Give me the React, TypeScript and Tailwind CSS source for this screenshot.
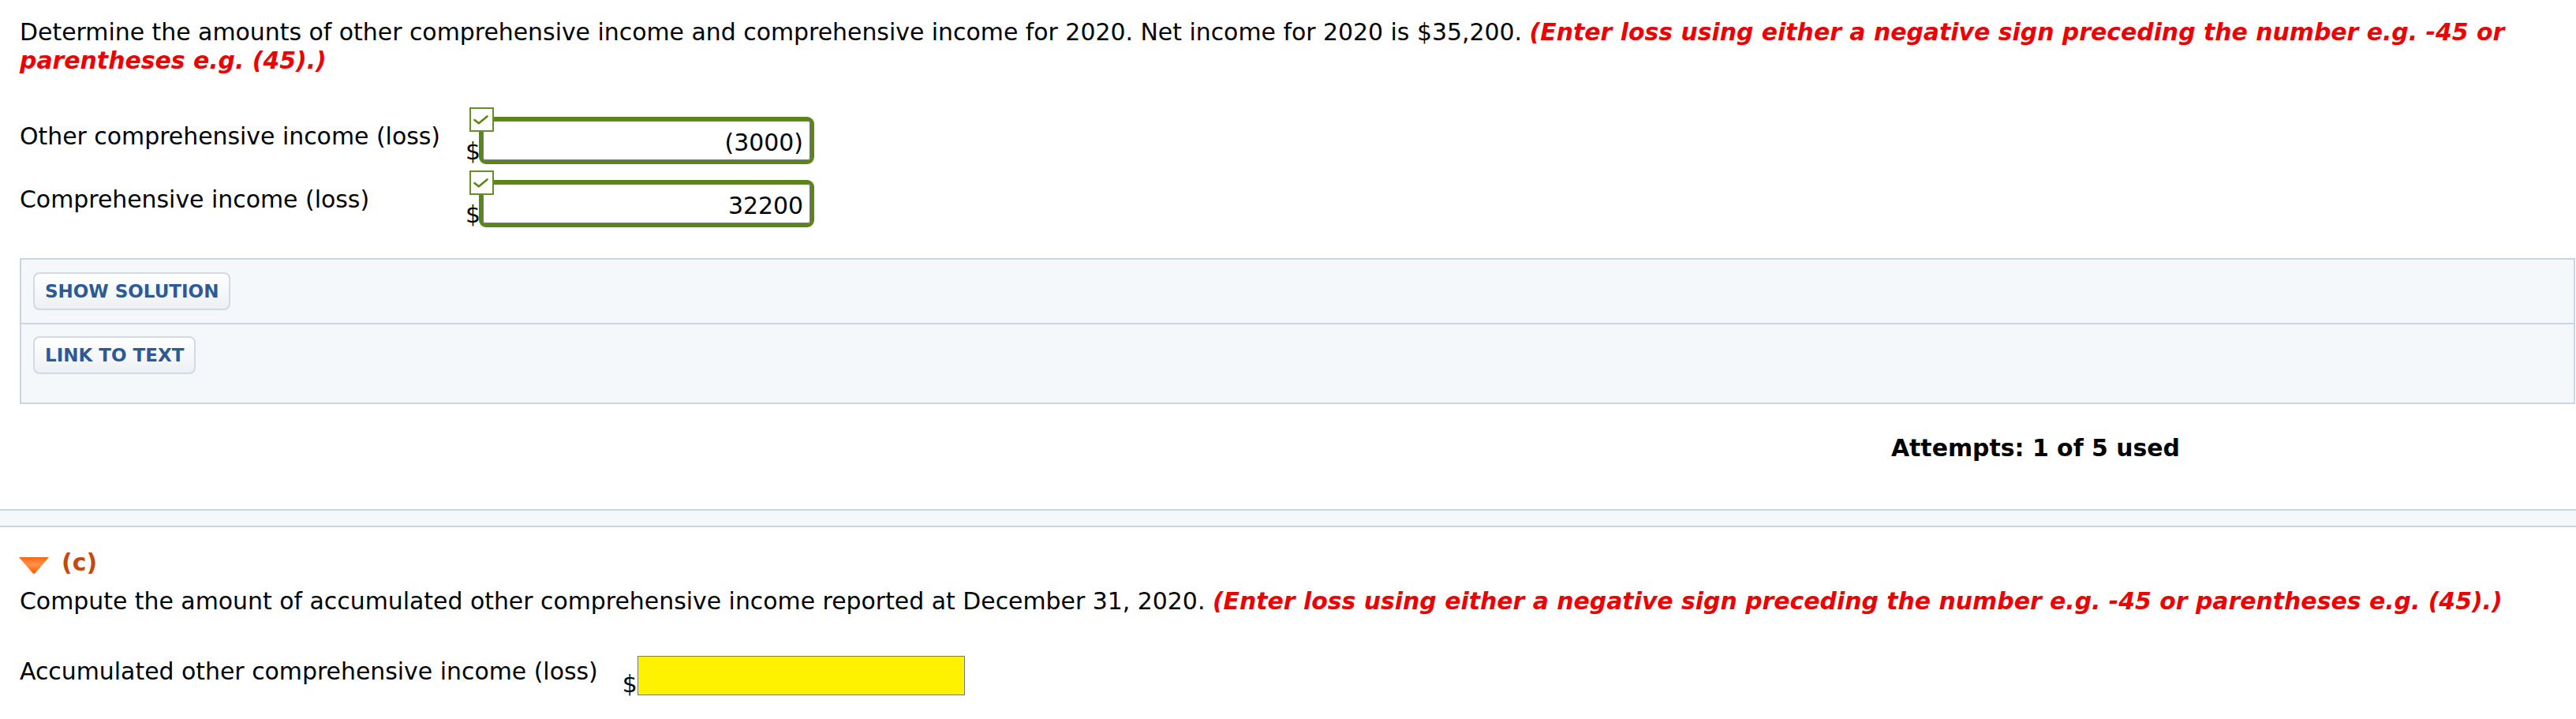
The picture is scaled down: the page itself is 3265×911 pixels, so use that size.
import React from "react";

function CorrectMark() {
  return (
    <svg
      width="31"
      height="31"
      viewBox="0 0 31 31"
      className="absolute left-[-17px] top-[-17px]"
    >
      <rect x="1" y="1" width="29" height="29" fill="#fff" stroke="#688f24" strokeWidth="2" />
      <polyline
        points="6.5,16 11.8,20.3 22.5,11.5"
        fill="none"
        stroke="#5c8517"
        strokeWidth="2.6"
        strokeLinejoin="round"
        strokeLinecap="round"
      />
    </svg>
  );
}

function AnsweredInput({ value }: { value: string }) {
  return (
    <div className="flex items-end">
      <span className="leading-[32px] w-[17px]">$</span>
      <div className="relative w-[425px] h-[60px] rounded-[9px] border-[5px] border-[#5c8517] bg-white">
        <input
          readOnly
          value={value}
          className="w-full h-full rounded-[3px] border border-[#777] bg-white text-right pr-[8px] pt-[5px] outline-none font-['DejaVu_Sans',sans-serif] text-[29.9px] text-black"
        />
        <CorrectMark />
      </div>
    </div>
  );
}

function PanelButton({ label }: { label: string }) {
  return (
    <button className="h-[48px] px-[13px] rounded-[8px] border-2 border-[#d3dae5] bg-gradient-to-b from-white to-[#edf0f4] text-[23px] font-bold text-[#2d5a94] leading-none">
      {label}
    </button>
  );
}

export default function App() {
  const rows = [
    { label: "Other comprehensive income (loss)", value: "(3000)" },
    { label: "Comprehensive income (loss)", value: "32200" },
  ];

  return (
    <div className="min-h-[911px] bg-white text-black font-['DejaVu_Sans',sans-serif] text-[29.9px] leading-[36px]">
      <div className="pl-[25px] pr-px pt-[23px]">
        <p className="whitespace-nowrap">
          Determine the amounts of other comprehensive income and comprehensive income for 2020. Net income for
          2020 is $35,200.{" "}
          <strong className="italic text-[#ee0000]">
            (Enter loss using either a negative sign preceding the number e.g. -45 or
            <br />
            parentheses e.g. (45).)
          </strong>
        </p>

        <div className="mt-[35px] grid grid-cols-[auto_auto] justify-start gap-x-[32px]">
          {rows.map((row) => (
            <React.Fragment key={row.label}>
              <div className="h-[80px] pt-[25px]">{row.label}</div>
              <div className="h-[80px] pt-[18px] flex items-start">
                <AnsweredInput value={row.value} />
              </div>
            </React.Fragment>
          ))}
        </div>

        <div className="mt-[37px] border-2 border-[#cbd4e1] bg-[#f5f8fb]">
          <div className="px-[15px] pt-[16px] pb-[16px] border-b-2 border-[#cbd4e1]">
            <PanelButton label="SHOW SOLUTION" />
          </div>
          <div className="px-[15px] pt-[15px] pb-[36px]">
            <PanelButton label="LINK TO TEXT" />
          </div>
        </div>

        <div className="mt-[38px] flex justify-end pr-[501px]">
          <span className="font-bold">Attempts: 1 of 5 used</span>
        </div>
      </div>

      <div className="mt-[59px] h-[23px] border-y-2 border-[#cbd4e1] bg-[#f5f8fb]" />

      <div className="pl-[25px] pr-px">
        <div className="mt-[27px] flex items-start">
          <svg width="38" height="21" viewBox="0 0 38 21" className="ml-[-1px] mt-[11px] mr-[16px]">
            <defs>
              <linearGradient id="tri" x1="0" y1="0" x2="0" y2="1">
                <stop offset="0" stopColor="#ff6410" />
                <stop offset="0.45" stopColor="#ff9448" />
                <stop offset="1" stopColor="#ff5a00" />
              </linearGradient>
            </defs>
            <path d="M0 0 H38 L20.5 20.2 Q19 21.5 17.5 20.2 Z" fill="url(#tri)" />
          </svg>
          <span className="font-bold text-[#c8470c]">(c)</span>
        </div>

        <p className="mt-[13px] whitespace-nowrap">
          Compute the amount of accumulated other comprehensive income reported at December 31, 2020.{" "}
          <strong className="italic text-[#ee0000]">
            (Enter loss using either a negative sign preceding the number e.g. -45 or parentheses e.g. (45).)
          </strong>
        </p>

        <div className="mt-[51px] flex items-start">
          <div className="pt-[2px] mr-[31px]">Accumulated other comprehensive income (loss)</div>
          <div className="flex items-end h-[50px]">
            <span className="leading-[28px] w-[19px]">$</span>
            <input
              readOnly
              value=""
              className="w-[415px] h-[50px] border border-[#777] bg-[#fff200] outline-none"
            />
          </div>
        </div>
      </div>
    </div>
  );
}
